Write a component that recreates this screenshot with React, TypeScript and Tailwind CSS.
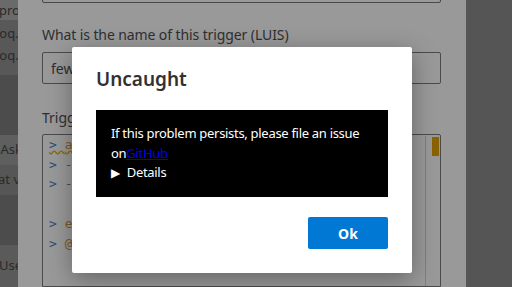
import React from "react";

export default function App() {
  const font = { fontFamily: '"Segoe UI", "Noto Sans", "Open Sans", sans-serif' };
  return (
    <div className="relative w-[512px] h-[287px] overflow-hidden flex bg-[#999999]" style={font}>
      {/* left sidebar */}
      <div className="w-[18px] h-full flex flex-col text-[13px] text-[#2a2a2a] bg-[#4d4d4d] overflow-hidden whitespace-nowrap">
        <div className="h-[20px] bg-[#6a6a6a] flex items-center justify-end leading-none"><span className="-mr-[2px]">pro</span></div>
        <div className="h-[55px] bg-[#585858] flex flex-col">
          <div className="h-[3px]" />
          <div className="h-[22px] flex items-center justify-end"><span className="-mr-[4px]">oq.i</span></div>
          <div className="h-[22px] flex items-center justify-end"><span className="-mr-[4px]">oq.l</span></div>
        </div>
        <div className="h-[60px] bg-[#4c4c4c]" />
        <div className="h-[30px] bg-[#5f5f5f] flex items-center justify-end"><span className="-mr-[4px]">Ask</span></div>
        <div className="h-[30px] bg-[#565656] flex items-center justify-end"><span className="-mr-[2px]">hat v</span></div>
        <div className="h-[50px] bg-[#4c4c4c]" />
        <div className="flex-1 bg-[#5a5a5a] flex items-center justify-end"><span className="-mr-[4px]">Use</span></div>
      </div>
      {/* main panel */}
      <div className="w-[448px] h-full bg-[#999999] pl-[24px] pr-[25px] flex flex-col text-[#2f2f2f]">
        <div className="h-[12px] -mt-[9px] border border-[#484848] rounded-[2px]" />
        <div className="mt-[22px] text-[14px] leading-[20px] tracking-[-0.1px]">What is the name of this trigger (LUIS)</div>
        <div className="mt-[7px] h-[32px] border border-[#4a4a4a] rounded-[2px] flex items-center pl-[8px] text-[14px]">few</div>
        <div className="mt-[24px] text-[14px] leading-[20px]">Trigger phrases</div>
        <div className="mt-[6px] flex-1 border border-[#4a4a4a] rounded-t-[2px] relative text-[13px]">
          <div className="pl-[6px] pt-[0px] leading-[19.7px]" style={{ fontFamily: '"DejaVu Sans Mono", monospace' }}>
            <div><span className="text-[#2d4e73] underline decoration-wavy decoration-[#8a6a00]">&gt; <span className="text-[#7a5a2a]">a</span></span></div>
            <div><span className="text-[#2d4e73]">&gt;</span> <span className="text-[#5a4a3a]">-</span></div>
            <div><span className="text-[#2d4e73]">&gt;</span> <span className="text-[#5a4a3a]">-</span></div>
            <div>&nbsp;</div>
            <div><span className="text-[#2d4e73]">&gt;</span> <span className="text-[#7a5a2a]">e</span></div>
            <div><span className="text-[#2d4e73]">&gt;</span> <span className="text-[#7a5a2a]">@</span></div>
          </div>
          <div className="absolute right-[14px] top-[1px] bottom-0 w-px bg-[#7f7f7f]" />
          <div className="absolute right-[1px] top-[2px] w-[7px] h-[19px] bg-[#8a6200]" />
        </div>
      </div>
      <div className="flex-1 h-full bg-[#555555]" />

      {/* dialog */}
      <div className="absolute left-[72px] top-[47px] w-[340px] h-[226px] bg-white rounded-[2px] shadow-[0_6px_24px_rgba(0,0,0,0.35)] px-[24px] pt-[18px]">
        <div className="text-[19px] font-semibold text-[#323130] leading-[28px]">Uncaught</div>
        <div className="mt-[17px] h-[87px] bg-black text-white text-[13px] leading-[19.5px] tracking-[-0.3px] pl-[15px] pr-[4px] pt-[14px]">
          <div className="whitespace-nowrap">If this problem persists, please file an issue</div>
          <div>on<a className="text-[#0000ee] underline" href="#">GitHub</a></div>
          <div className="flex items-center"><span className="text-[12px] mr-[7px]">▶</span>Details</div>
        </div>
        <div className="mt-[20px] flex justify-end">
          <button className="w-[80px] h-[32px] bg-[#0078d4] text-white font-bold text-[14px] rounded-[2px]">Ok</button>
        </div>
      </div>
    </div>
  );
}
